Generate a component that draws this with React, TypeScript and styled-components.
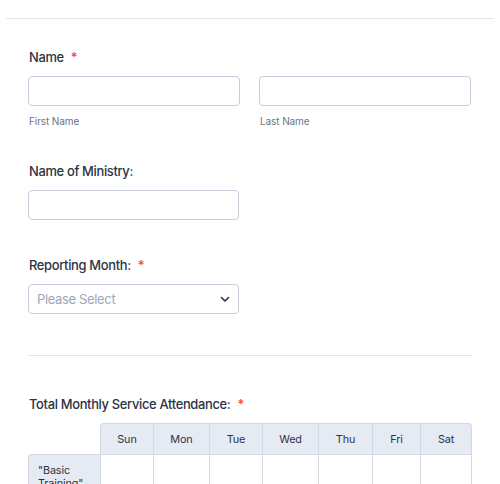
import React from "react";
import styled, { createGlobalStyle } from "styled-components";

const Global = createGlobalStyle`
  html, body { margin: 0; padding: 0; background: #fff; }
  body { font-family: Inter, "Noto Sans", sans-serif; color: #2c3345; }
  * { box-sizing: border-box; }
`;

const Page = styled.div`
  width: 500px;
  padding-top: 18px;
`;

const TopRule = styled.div`
  margin: 0 6px;
  border-top: 1px solid #e3e6ef;
`;

const Form = styled.div`
  padding: 0 28px;
  display: flex;
  flex-direction: column;
`;

const Field = styled.div<{ $top: number }>`
  margin-top: ${(p) => p.$top}px;
  display: flex;
  flex-direction: column;
`;

const Label = styled.div`
  font-size: 12.9px;
  font-weight: 450;
  letter-spacing: -0.32px;
  line-height: 16px;
  padding-left: 1px;
  margin-bottom: 10px;
  color: #2c3345;
`;

const Star = styled.span`
  color: #f23a3c;
  margin-left: 7px;
`;

const Row = styled.div`
  display: flex;
  gap: 19px;
`;

const Col = styled.div`
  display: flex;
  flex-direction: column;
  width: 212px;
`;

const Input = styled.div<{ $w?: number }>`
  width: ${(p) => (p.$w ? `${p.$w}px` : "100%")};
  height: 30px;
  border: 1px solid #c8cddc;
  border-radius: 4px;
  background: #fff;
`;

const Sub = styled.div`
  margin-top: 9px;
  font-size: 10px;
  letter-spacing: -0.1px;
  line-height: 12px;
  color: #6b7385;
  padding-left: 1px;
`;

const Select = styled.div`
  width: 211px;
  height: 30px;
  border: 1px solid #c8cddc;
  border-radius: 4px;
  display: flex;
  align-items: center;
  justify-content: space-between;
  padding: 0 8px 0 8px;
  font-size: 13px;
  letter-spacing: -0.35px;
  color: #a0a6b7;
`;

const Divider = styled.div`
  margin-top: 41px;
  border-top: 1px solid #e3e6ef;
`;

const Grid = styled.div`
  display: grid;
  grid-template-columns: 72px 53px 56px 53px 56px 54px 48px 52px;
  grid-auto-rows: auto;
`;

const Blank = styled.div``;

const Head = styled.div<{ $first?: boolean; $last?: boolean }>`
  height: 31px;
  background: #e6eaf3;
  border-top: 1px solid #d3d8e3;
  border-left: 1px solid #d3d8e3;
  ${(p) => (p.$last ? "border-right: 1px solid #d3d8e3;" : "")}
  border-top-left-radius: ${(p) => (p.$first ? "4px" : "0")};
  border-top-right-radius: ${(p) => (p.$last ? "4px" : "0")};
  display: flex;
  align-items: center;
  justify-content: center;
  font-size: 10.8px;
  letter-spacing: -0.1px;
  color: #2c3345;
`;

const RowLabel = styled.div`
  background: #e6eaf3;
  border-top: 1px solid #d3d8e3;
  border-left: 1px solid #d3d8e3;
  border-top-left-radius: 4px;
  padding: 9px 8px 8px 9px;
  font-size: 10.8px;
  letter-spacing: -0.1px;
  line-height: 13px;
  height: 60px;
`;

const Cell = styled.div<{ $last?: boolean }>`
  border-top: 1px solid #d3d8e3;
  border-left: 1px solid #d3d8e3;
  ${(p) => (p.$last ? "border-right: 1px solid #d3d8e3;" : "")}
  background: #fff;
`;

const Chevron = () => (
  <svg width="10" height="7" viewBox="0 0 10 7">
    <path d="M1.5 1.5 L5 5 L8.5 1.5" fill="none" stroke="#2c3345" strokeWidth="1.6" strokeLinecap="round" strokeLinejoin="round" />
  </svg>
);

const days = ["Sun", "Mon", "Tue", "Wed", "Thu", "Fri", "Sat"];

export default function App() {
  return (
    <Page>
      <Global />
      <TopRule />
      <Form>
        <Field $top={31}>
          <Label>
            Name<Star>*</Star>
          </Label>
          <Row>
            <Col>
              <Input />
              <Sub>First Name</Sub>
            </Col>
            <Col>
              <Input />
              <Sub>Last Name</Sub>
            </Col>
          </Row>
        </Field>
        <Field $top={37}>
          <Label>Name of Ministry:</Label>
          <Input $w={211} />
        </Field>
        <Field $top={38}>
          <Label>
            Reporting Month:<Star>*</Star>
          </Label>
          <Select>
            <span>Please Select</span>
            <Chevron />
          </Select>
        </Field>
        <Divider />
        <Field $top={41}>
          <Label>
            Total Monthly Service Attendance:<Star>*</Star>
          </Label>
          <Grid>
            <Blank />
            {days.map((d, i) => (
              <Head key={d} $first={i === 0} $last={i === days.length - 1}>
                {d}
              </Head>
            ))}
            <RowLabel>"Basic Training" Service</RowLabel>
            {days.map((d, i) => (
              <Cell key={d} $last={i === days.length - 1} />
            ))}
          </Grid>
        </Field>
      </Form>
    </Page>
  );
}
